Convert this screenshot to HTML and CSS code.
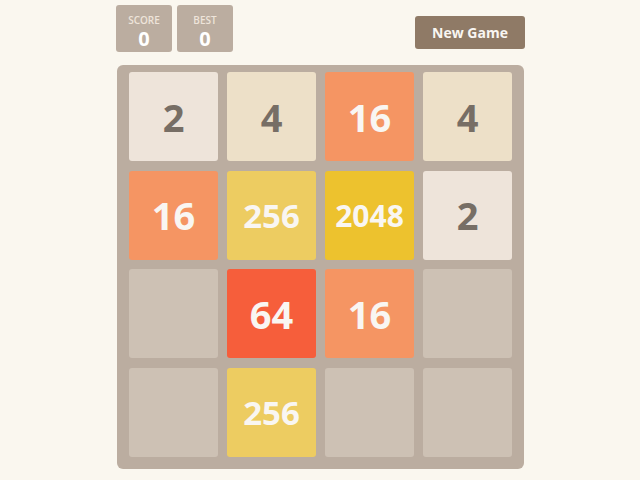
FILE: index.html
```html
<!DOCTYPE html>
<html>
<head>
  <title>2048</title>
  <link rel="stylesheet" href="styles.css">
</head>
<body>
  <div class="container">
    <div class="heading">
      <div class="scores">
        <div class="score-box">
          <span class="score-label">SCORE</span>
          <span class="score-value">0</span>
        </div>
        <div class="score-box">
          <span class="score-label">BEST</span>
          <span class="score-value">0</span>
        </div>
      </div>
      <button class="new-game">New Game</button>
    </div>

    <div class="board">
      <div class="tile tile-2">2</div>
      <div class="tile tile-4">4</div>
      <div class="tile tile-16">16</div>
      <div class="tile tile-4">4</div>

      <div class="tile tile-16">16</div>
      <div class="tile tile-256">256</div>
      <div class="tile tile-2048">2048</div>
      <div class="tile tile-2">2</div>

      <div class="tile"></div>
      <div class="tile tile-64">64</div>
      <div class="tile tile-16">16</div>
      <div class="tile"></div>

      <div class="tile"></div>
      <div class="tile tile-256">256</div>
      <div class="tile"></div>
      <div class="tile"></div>
    </div>
  </div>
</body>
</html>
```

FILE: styles.css
```css
body {
  margin: 0;
  background-color: #faf7ef;
  font-family: "Open Sans", "DejaVu Sans", sans-serif;
  color: #776e65;
}

.container {
  width: 408px;
  margin: 0 auto;
  padding-top: 5px;
}

.heading {
  display: flex;
  justify-content: space-between;
  align-items: flex-start;
}

.scores {
  display: flex;
  gap: 5px;
}

.score-box {
  width: 56px;
  height: 47px;
  background-color: #bbada0;
  border-radius: 3px;
  display: flex;
  flex-direction: column;
  align-items: center;
  padding-top: 8px;
  box-sizing: border-box;
}

.score-label {
  font-size: 10px;
  font-weight: 600;
  color: #eee4da;
  line-height: 14px;
}

.score-value {
  margin-top: 2px;
  font-size: 20px;
  font-weight: 700;
  color: #fff;
  line-height: 20px;
}

.new-game {
  margin-top: 11px;
  width: 110px;
  height: 33px;
  border: none;
  border-radius: 3px;
  background-color: #8f7a66;
  color: #f9f6f2;
  font-family: "Open Sans", "DejaVu Sans", sans-serif;
  font-size: 14px;
  font-weight: 700;
  margin-right: -1px;
}

.board {
  margin-top: 13px;
  margin-left: 1px;
  background-color: #bbada0;
  border-radius: 6px;
  padding: 7px 13px 12px 12px;
  display: grid;
  grid-template-columns: repeat(4, 89px);
  grid-auto-rows: 89px;
  column-gap: 9px;
  row-gap: 9.5px;
}

.tile {
  background-color: #cdc1b4;
  border-radius: 3px;
  display: flex;
  align-items: center;
  justify-content: center;
  font-size: 38px;
  font-weight: 700;
}

.tile-2 { background-color: #eee4da; }
.tile-4 { background-color: #ede0c8; }
.tile-16 { background-color: #f59563; color: #f9f6f2; }
.tile-64 { background-color: #f65e3b; color: #f9f6f2; }
.tile-256 { background-color: #edcc61; color: #f9f6f2; font-size: 33px; }
.tile-2048 { background-color: #edc22e; color: #f9f6f2; font-size: 30px; }
```
